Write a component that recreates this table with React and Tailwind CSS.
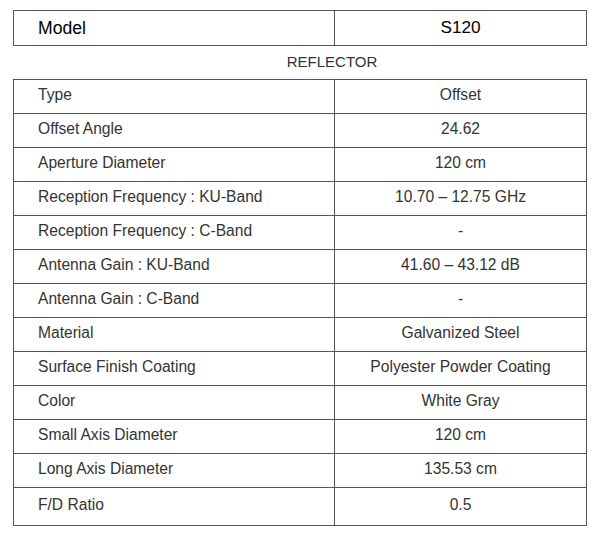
const rows = [
  ["Type", "Offset"],
  ["Offset Angle", "24.62"],
  ["Aperture Diameter", "120 cm"],
  ["Reception Frequency : KU-Band", "10.70 – 12.75 GHz"],
  ["Reception Frequency : C-Band", "-"],
  ["Antenna Gain : KU-Band", "41.60 – 43.12 dB"],
  ["Antenna Gain : C-Band", "-"],
  ["Material", "Galvanized Steel"],
  ["Surface Finish Coating", "Polyester Powder Coating"],
  ["Color", "White Gray"],
  ["Small Axis Diameter", "120 cm"],
  ["Long Axis Diameter", "135.53 cm"],
  ["F/D Ratio", "0.5"],
]

export default function App() {
  return (
    <div
      className="w-[600px] h-[536px] bg-white px-[13px] pt-[10px]"
      style={{ fontFamily: '"Liberation Sans", Arial, sans-serif' }}
    >
      <div className="grid grid-cols-[321px_1fr] h-[36px] border border-[#555]">
        <div className="flex items-center pl-[24px] border-r border-[#555] text-[17.6px] text-black">
          Model
        </div>
        <div className="flex items-center justify-center text-[17.2px] text-black">S120</div>
      </div>

      <div className="h-[33px] flex items-center justify-center pl-[64px] pb-[1px] text-[15px] text-[#333]">
        REFLECTOR
      </div>

      <div className="border border-[#555]">
        {rows.map(([label, value], i) => (
          <div
            key={label}
            className={
              "grid grid-cols-[321px_1fr] text-[15.6px] text-[#333] " +
              (i === rows.length - 1 ? "h-[37px]" : "h-[34px] border-b border-[#555]")
            }
          >
            <div className="flex items-center pl-[24px] pb-[3px] border-r border-[#555]">{label}</div>
            <div className="flex items-center justify-center pb-[3px]">{value}</div>
          </div>
        ))}
      </div>
    </div>
  )
}
